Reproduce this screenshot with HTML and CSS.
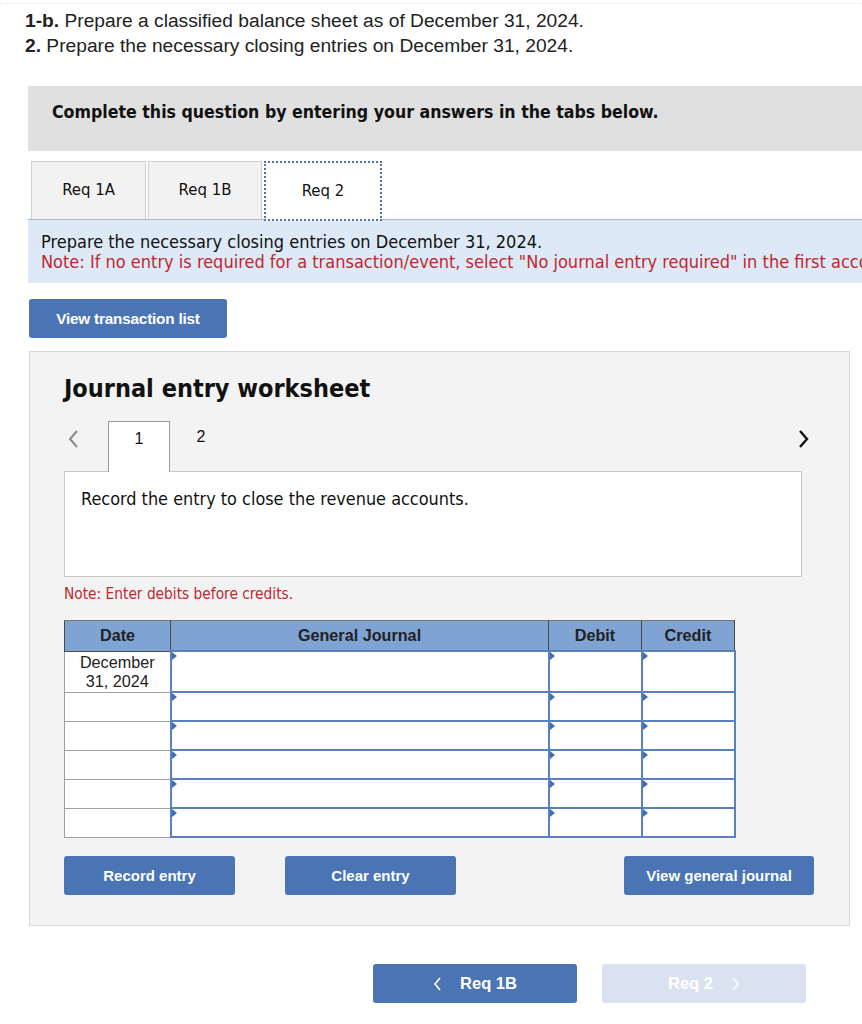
FILE: index.html
```html
<!DOCTYPE html>
<html>
<head>
<meta charset="utf-8">
<link rel="stylesheet" href="styles.css">
</head>
<body>
<div class="intro">
  <p><b>1-b.</b> Prepare a classified balance sheet as of December 31, 2024.</p>
  <p><b>2.</b> Prepare the necessary closing entries on December 31, 2024.</p>
</div>

<div class="wrap">
  <div class="banner">Complete this question by entering your answers in the tabs below.</div>

  <div class="tabs">
    <div class="tab">Req 1A</div>
    <div class="tab">Req 1B</div>
    <div class="tab active">Req 2</div>
  </div>

  <div class="instr">
    <div>Prepare the necessary closing entries on December 31, 2024.</div>
    <div class="red">Note: If no entry is required for a transaction/event, select "No journal entry required" in the first account field.</div>
  </div>

  <div class="btn-row-top"><button class="btn btn-list">View transaction list</button></div>

  <div class="panel">
    <h2 class="panel-title">Journal entry worksheet</h2>
    <div class="nav">
      <span class="chev chev-left">
        <svg width="12" height="20" viewBox="0 0 12 20"><path d="M10 2 L3 10 L10 18" fill="none" stroke="#8a8a8a" stroke-width="2"/></svg>
      </span>
      <div class="ntab active">1</div>
      <div class="ntab">2</div>
      <span class="chev chev-right">
        <svg width="12" height="20" viewBox="0 0 12 20"><path d="M2 2 L9 10 L2 18" fill="none" stroke="#111" stroke-width="2.4"/></svg>
      </span>
    </div>
    <div class="entry-box">Record the entry to close the revenue accounts.</div>
    <div class="note">Note: Enter debits before credits.</div>

    <table class="journal">
      <colgroup>
        <col class="c-date"><col class="c-gj"><col class="c-amt"><col class="c-amt">
      </colgroup>
      <thead>
        <tr><th>Date</th><th>General Journal</th><th>Debit</th><th>Credit</th></tr>
      </thead>
      <tbody>
        <tr class="r1"><td class="date">December<br>31, 2024</td><td class="in"></td><td class="in"></td><td class="in"></td></tr>
        <tr class="r"><td class="date"></td><td class="in"></td><td class="in"></td><td class="in"></td></tr>
        <tr class="r"><td class="date"></td><td class="in"></td><td class="in"></td><td class="in"></td></tr>
        <tr class="r"><td class="date"></td><td class="in"></td><td class="in"></td><td class="in"></td></tr>
        <tr class="r"><td class="date"></td><td class="in"></td><td class="in"></td><td class="in"></td></tr>
        <tr class="r"><td class="date"></td><td class="in"></td><td class="in"></td><td class="in"></td></tr>
      </tbody>
    </table>

    <div class="actions">
      <button class="btn btn-act">Record entry</button>
      <button class="btn btn-act btn-clear">Clear entry</button>
      <button class="btn btn-act btn-view">View general journal</button>
    </div>
  </div>

  <div class="pager">
    <button class="btn btn-page">
      <svg width="10" height="16" viewBox="0 0 10 16"><path d="M7 2 L2 8 L7 14" fill="none" stroke="#fff" stroke-width="1.6"/></svg>
      <span>Req 1B</span>
    </button>
    <button class="btn btn-page disabled">
      <span>Req 2</span>
      <svg width="10" height="16" viewBox="0 0 10 16"><path d="M3 2 L8 8 L3 14" fill="none" stroke="#fff" stroke-width="1.6"/></svg>
    </button>
  </div>
</div>
</body>
</html>
```

FILE: styles.css
```css
html, body {
  margin: 0;
  padding: 0;
  background: #fff;
}
body {
  width: 862px;
  overflow: hidden;
  font-family: "Liberation Sans", Arial, sans-serif;
  color: #222;
}
.intro {
  padding: 6px 0 0 25px;
  font-family: "Liberation Sans", Arial, sans-serif;
  font-size: 19.2px;
  line-height: 22px;
  color: #222;
  border-top: 1px dotted #e4e4e4;
  margin-top: 3px;
}
.intro p {
  margin: 0;
  white-space: nowrap;
}
.intro p + p {
  margin-top: 3px;
}
.wrap {
  margin-left: 28px;
  width: 834px;
}
.banner {
  margin-top: 29px;
  height: 65px;
  background: #e0e0e0;
  box-sizing: border-box;
  padding: 16px 0 0 24px;
  font-family: "DejaVu Sans Condensed", "DejaVu Sans", sans-serif;
  font-stretch: condensed;
  font-weight: bold;
  font-size: 17.6px;
  color: #111;
  white-space: nowrap;
}
.tabs {
  display: flex;
  margin-top: 10px;
  height: 58px;
  border-bottom: 1px solid #b5b5b5;
  padding-left: 3px;
  gap: 2px;
}
.tab {
  width: 115px;
  box-sizing: border-box;
  background: #f2f2f2;
  border: 1px solid #cfcfcf;
  border-bottom: none;
  display: flex;
  align-items: center;
  justify-content: center;
  font-family: "DejaVu Sans Condensed", "DejaVu Sans", sans-serif;
  font-stretch: condensed;
  font-size: 16.6px;
  color: #111;
  padding-bottom: 2px;
}
.tab + .tab {
  width: 114px;
}
.tab.active {
  width: 118px;
  background: #fff;
  border: 2px dotted #4a74b4;
  margin-bottom: -2px;
  height: 60px;
}
.instr {
  background: #dde9f6;
  height: 63px;
  box-sizing: border-box;
  padding: 12px 0 0 13px;
  font-family: "DejaVu Sans Condensed", "DejaVu Sans", sans-serif;
  font-stretch: condensed;
  font-size: 18px;
  line-height: 20px;
  color: #111;
  white-space: nowrap;
  overflow: hidden;
}
.red {
  color: #c1272d;
}
.btn-row-top {
  margin-top: 16px;
  margin-left: 1px;
}
.btn {
  border: none;
  background: #4a74b4;
  color: #fff;
  font-family: "Liberation Sans", Arial, sans-serif;
  font-weight: bold;
  font-size: 15px;
  border-radius: 3px;
  padding: 0;
  cursor: pointer;
  display: inline-flex;
  align-items: center;
  justify-content: center;
}
.btn-list {
  width: 198px;
  height: 39px;
  font-size: 15.3px;
  letter-spacing: -0.2px;
}
.panel {
  margin-top: 13px;
  margin-left: 1px;
  width: 821px;
  height: 575px;
  box-sizing: border-box;
  background: #f3f3f3;
  border: 1px solid #d8d8d8;
  padding: 0 0 0 34px;
}
.panel-title {
  margin: 22px 0 0 0;
  font-family: "DejaVu Sans Condensed", "DejaVu Sans", sans-serif;
  font-stretch: condensed;
  font-weight: bold;
  font-size: 25px;
  line-height: 30px;
  color: #111;
}
.nav {
  display: flex;
  align-items: flex-end;
  height: 50px;
  margin-top: 17px;
  width: 746px;
  position: relative;
}
.chev {
  display: flex;
  align-items: center;
  height: 34px;
  align-self: flex-start;
}
.chev-left {
  margin-left: 3px;
  width: 41px;
  padding-top: 1px;
}
.chev-right {
  margin-left: auto;
  margin-right: 0;
  padding-top: 1px;
}
.ntab {
  width: 62px;
  height: 51px;
  box-sizing: border-box;
  display: flex;
  justify-content: center;
  padding-top: 8px;
  font-family: "Liberation Sans", Arial, sans-serif;
  font-size: 16px;
  color: #111;
}
.ntab.active {
  background: #fff;
  border: 1px solid #9a9a9a;
  border-bottom: none;
  margin-bottom: -1px;
  position: relative;
  z-index: 1;
}
.entry-box {
  width: 738px;
  height: 106px;
  box-sizing: border-box;
  background: #fff;
  border: 1px solid #c8c8c8;
  padding: 16px 0 0 16px;
  font-family: "DejaVu Sans Condensed", "DejaVu Sans", sans-serif;
  font-stretch: condensed;
  font-size: 17.9px;
  color: #111;
}
.note {
  margin-top: 8px;
  font-family: "DejaVu Sans Condensed", "DejaVu Sans", sans-serif;
  font-stretch: condensed;
  font-size: 15.3px;
  color: #c1272d;
  line-height: 19px;
}
.journal {
  margin-top: 16px;
  border-collapse: collapse;
  width: 670px;
  table-layout: fixed;
  font-family: "Liberation Sans", Arial, sans-serif;
}
.c-date { width: 106px; }
.c-gj { width: 378px; }
.c-amt { width: 93px; }
.journal th {
  background: #7fa3d2;
  border: 1px solid #4a4a4a;
  border-top-color: #777;
  height: 29px;
  padding: 0;
  font-size: 16.2px;
  font-weight: bold;
  color: #222;
}
.journal td {
  padding: 0;
  background: #fff;
}
.journal td.date {
  border: 1px solid #a0a0a0;
  text-align: center;
  font-size: 16.2px;
  line-height: 19px;
  color: #222;
  vertical-align: top;
  padding-top: 1px;
}
.journal tr.r1 td { height: 39px; }
.journal tr.r td { height: 27px; }
.journal tr.r td.date { height: 29px; padding-top: 0; box-sizing: border-box; }
.journal td.in {
  border: 2px solid #5a80be;
  position: relative;
}
.journal td.in::before {
  content: "";
  position: absolute;
  left: 0;
  top: 0;
  border-left: 5px solid #3f6db5;
  border-top: 4px solid transparent;
  border-bottom: 4px solid transparent;
}
.actions {
  display: flex;
  margin-top: 18px;
  width: 750px;
}
.btn-act {
  width: 171px;
  height: 39px;
}
.btn-clear {
  margin-left: 50px;
}
.btn-view {
  margin-left: auto;
  width: 190px;
}
.pager {
  display: flex;
  margin-top: 38px;
  margin-left: 345px;
  gap: 25px;
}
.btn-page {
  width: 204px;
  height: 39px;
  font-size: 16.5px;
  gap: 17px;
}
.btn-page svg {
  display: block;
}
.btn-page.disabled {
  background: #d9e3f0;
  color: #fff;
  gap: 17px;
}
```
